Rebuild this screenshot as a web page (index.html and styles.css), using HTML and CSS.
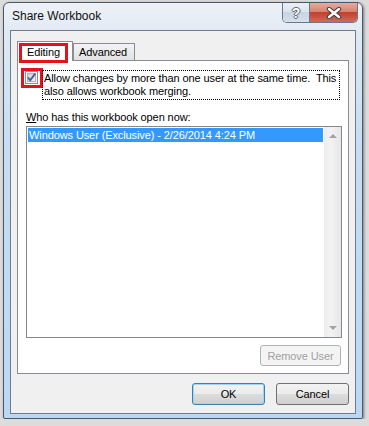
FILE: index.html
```html
<!DOCTYPE html>
<html>
<head>
  <title>Share Workbook</title>
  <link rel="stylesheet" href="styles.css">
</head>
<body>
  <div class="window">
    <div class="titlebar">
      <span class="title">Share Workbook</span>
      <div class="caption-btns">
        <span class="cap help">?</span>
        <span class="cap close">
          <svg width="16" height="12" viewBox="0 0 16 12">
            <path d="M3 2 L13 10 M13 2 L3 10" stroke="#3d3d3d" stroke-width="4.4" stroke-linecap="round"/>
            <path d="M3 2 L13 10 M13 2 L3 10" stroke="#fff" stroke-width="2.4" stroke-linecap="round"/>
          </svg>
        </span>
      </div>
    </div>

    <div class="client">
      <div class="tabs">
        <div class="tab selected">Editing</div>
        <div class="tab">Advanced</div>
      </div>

      <div class="panel">
        <div class="share-row">
          <span class="mark">
            <svg class="checkbox" width="13" height="13" viewBox="0 0 13 13">
              <defs>
                <linearGradient id="cb" x1="0" y1="0" x2="1" y2="1">
                  <stop offset="0" stop-color="#cbcfd5"/>
                  <stop offset="1" stop-color="#f6f6f6"/>
                </linearGradient>
              </defs>
              <rect x="0.5" y="0.5" width="12" height="12" fill="#f4f4f4" stroke="#8e8f8f"/>
              <rect x="2.5" y="2.5" width="8" height="8" fill="url(#cb)" stroke="#adb2b5"/>
              <path d="M3 6.5 L5.2 9.2 L10.2 2.6" fill="none" stroke="#3d5a95" stroke-width="1.8"/>
            </svg>
          </span>
          <div class="focus">Allow changes by more than one user at the same time.&nbsp; This<br>also allows workbook merging.</div>
        </div>

        <div class="list-label"><u>W</u>ho has this workbook open now:</div>
        <div class="listbox">
          <div class="items">
            <div class="item selected">Windows User (Exclusive) - 2/26/2014 4:24 PM</div>
          </div>
          <div class="scrollbar">
            <span class="arrow up"></span>
            <span class="arrow down"></span>
          </div>
        </div>

        <div class="panel-actions">
          <button class="btn" disabled>Remove User</button>
        </div>
      </div>

      <div class="dialog-actions">
        <button class="btn default">OK</button>
        <button class="btn">Cancel</button>
      </div>
    </div>
  </div>
</body>
</html>
```

FILE: styles.css
```css
body {
  margin: 0;
  background-color: #dcdcdc;
  font-family: 'Liberation Sans', Arial, sans-serif;
  font-size: 11px;
  letter-spacing: -0.1px;
  color: #000;
}

.window {
  width: 360px;
  height: 417px;
  box-sizing: border-box;
  margin: 2px 0 0 3px;
  border: 1px solid #4b5866;
  border-radius: 6px 6px 2px 2px;
  background: linear-gradient(#eef2f7 0, #dfe9f4 30px, #c6ddf3 140px, #bad8f6 100%);
  box-shadow: 1px 1px 3px rgba(0,0,0,0.45);
  padding: 0 6px;
}

.titlebar {
  display: flex;
  height: 27px;
  margin: 0 -6px;
  padding: 0 4px 0 8px;
}

.title {
  padding-top: 7px;
  line-height: 13px;
  font-size: 12px;
  letter-spacing: 0;
  color: #111;
}

.caption-btns {
  display: flex;
  margin-left: auto;
  height: 19px;
  border: 1px solid #6b7787;
  border-top: none;
  border-radius: 0 0 5px 5px;
  overflow: hidden;
}

.cap {
  display: flex;
  align-items: center;
  justify-content: center;
}

.help {
  width: 26px;
  border-right: 1px solid #6b7787;
  background: linear-gradient(#e9eff6 0, #dbe4ef 45%, #c8d4e3 50%, #d6e0ec 100%);
  color: #fff;
  font-weight: bold;
  font-size: 14px;
  text-shadow: -1px 0 #5c6670, 1px 0 #5c6670, 0 -1px #5c6670, 0 1px #5c6670;
}

.close {
  width: 47px;
  background: linear-gradient(#e9a99b 0, #d98372 45%, #c2402e 50%, #d26a57 100%);
}

.client {
  height: 384px;
  box-sizing: border-box;
  border: 1px solid #6f7c8a;
  background-color: #f0f0f0;
  padding: 10px 6px 8px 6px;
}

.tabs {
  display: flex;
  align-items: flex-end;
  height: 19px;
}

.tab {
  height: 17px;
  box-sizing: border-box;
  border: 1px solid #898c95;
  border-bottom: none;
  padding: 1px 7px 0 5px;
  line-height: 15px;
  background: linear-gradient(#f3f3f3, #e2e2e2);
}

.tab.selected {
  position: relative;
  z-index: 1;
  width: 56px;
  height: 20px;
  margin-bottom: -1px;
  padding: 3px 0 0 9px;
  background: #fff;
}

.tab.selected::after {
  content: "";
  position: absolute;
  left: 1px;
  top: 1px;
  width: 49px;
  height: 20px;
  box-sizing: border-box;
  border: 3px solid #e3121c;
}

.panel {
  border: 1px solid #898c95;
  background-color: #fff;
  padding: 0 7px 7px 0;
}

.share-row {
  display: flex;
  align-items: flex-start;
  padding: 7px 0 0 3px;
}

.mark {
  flex-shrink: 0;
  width: 22px;
  height: 20px;
  box-sizing: border-box;
  border: 3px solid #e3121c;
  padding-left: 1px;
}

.checkbox {
  display: block;
}

.focus {
  flex-shrink: 0;
  width: 298px;
  height: 30px;
  box-sizing: border-box;
  margin: 2px 0 0 -1px;
  border: 1px dotted #000;
  padding: 1px 0 0 1px;
  line-height: 13px;
  white-space: nowrap;
}

.list-label {
  margin: 11px 0 0 8px;
  line-height: 13px;
}

.listbox {
  display: flex;
  width: 316px;
  height: 212px;
  box-sizing: border-box;
  margin: 2px 0 0 8px;
  border: 1px solid #828790;
}

.items {
  flex: 1;
  padding: 1px 1px 0 1px;
}

.item {
  height: 14px;
  padding-left: 1px;
  line-height: 14px;
}

.item.selected {
  background-color: #3399ff;
  color: #fff;
}

.scrollbar {
  display: flex;
  flex-direction: column;
  justify-content: space-between;
  align-items: center;
  width: 17px;
  background: linear-gradient(to right, #ececec, #f3f3f3 40%, #e6e6e6);
  padding: 7px 0 7px 0;
  box-sizing: border-box;
}

.arrow {
  width: 0;
  height: 0;
  border-left: 4px solid transparent;
  border-right: 4px solid transparent;
}

.arrow.up {
  border-bottom: 4px solid #a3a3a3;
}

.arrow.down {
  border-top: 4px solid #a3a3a3;
}

.panel-actions {
  display: flex;
  justify-content: flex-end;
  margin-top: 7px;
}

.btn {
  height: 21px;
  box-sizing: border-box;
  border: 1px solid #707070;
  border-radius: 3px;
  background: linear-gradient(#f2f2f2 0, #ebebeb 50%, #dddddd 51%, #cfcfcf 100%);
  font-family: inherit;
  font-size: 11px;
  letter-spacing: inherit;
  color: #000;
  padding: 0;
}

.btn:disabled {
  width: 81px;
  border-color: #adb2b5;
  background: #f4f4f4;
  color: #a0a0a0;
}

.dialog-actions {
  display: flex;
  justify-content: flex-end;
  gap: 11px;
  margin-top: 9px;
}

.dialog-actions .btn {
  width: 73px;
  height: 22px;
}

.btn.default {
  border-color: #3c7fb1;
  box-shadow: inset 0 0 0 1px #9fd5f5;
}
```
